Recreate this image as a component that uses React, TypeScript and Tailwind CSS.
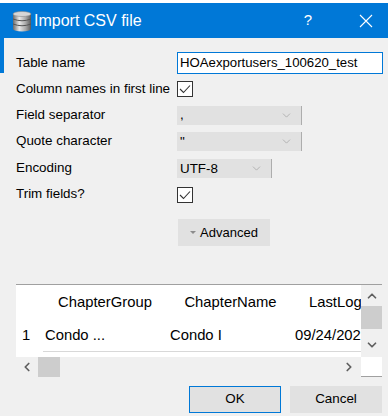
import { ChevronDown, ChevronLeft, ChevronRight, ChevronUp } from "lucide-react";

function DbIcon() {
    return (
        <svg width="22" height="22" viewBox="0 0 22 22">
            <defs>
                <linearGradient id="cyl" x1="0" x2="1" y1="0" y2="0">
                    <stop offset="0" stopColor="#6b6b6b" />
                    <stop offset="0.35" stopColor="#e8e8e8" />
                    <stop offset="0.7" stopColor="#a8a8a8" />
                    <stop offset="1" stopColor="#5a5a5a" />
                </linearGradient>
            </defs>
            <rect x="2" y="4" width="18" height="15" fill="url(#cyl)" />
            <ellipse cx="11" cy="19" rx="9" ry="2.5" fill="url(#cyl)" />
            <ellipse cx="11" cy="4" rx="9" ry="2.5" fill="#d6d6d6" stroke="#8a8a8a" strokeWidth="0.6" />
            <path d="M2 9 Q11 12.5 20 9" fill="none" stroke="#555" strokeWidth="1" />
            <path d="M2 14 Q11 17.5 20 14" fill="none" stroke="#555" strokeWidth="1" />
        </svg>
    );
}

function Check() {
    return (
        <div className="w-[16px] h-[16px] border border-[#333333] bg-white flex items-center justify-center">
            <svg width="12" height="10" viewBox="0 0 12 10">
                <path d="M1 5 L4.5 8.5 L11 1.5" fill="none" stroke="#333333" strokeWidth="1.1" />
            </svg>
        </div>
    );
}

function Combo({ value, width }: { value: string; width: string }) {
    return (
        <div className={`${width} h-[19px] bg-[#e1e1e1] border-r border-[#adadad] flex items-center justify-between pl-[3px] pr-[8px]`}>
            <span className="text-black leading-none">{value}</span>
            <ChevronDown size={13} strokeWidth={1.2} className="text-[#9a9a9a]" />
        </div>
    );
}

function Row({ label, h, children }: { label: string; h: string; children: React.ReactNode }) {
    return (
        <div className={`flex items-center ${h}`}>
            <div className="w-[161px] shrink-0 whitespace-nowrap text-black">{label}</div>
            {children}
        </div>
    );
}

export default function App() {
    return (
        <div className="w-[388px] h-[416px] bg-[#f0f0f0] flex flex-col overflow-hidden font-['Liberation_Sans',sans-serif] text-[13.4px] text-black">
            <div className="h-[3px] bg-white" />
            <div className="h-[35px] bg-[#0078d7] flex items-center text-white">
                <div className="ml-[11px] mt-[1px]"><DbIcon /></div>
                <span className="ml-[1px] text-[16px]">Import CSV file</span>
                <span className="ml-auto text-[15px] mr-[47px]">?</span>
                <svg width="14" height="14" viewBox="0 0 14 14" className="mr-[15px]">
                    <path d="M1 1 L13 13 M13 1 L1 13" stroke="white" strokeWidth="1.1" />
                </svg>
            </div>
            <div className="relative flex-1 flex flex-col">
                <div className="absolute left-0 top-0 w-[4px] h-[35px] bg-[#0078d7]" />
                <div className="flex flex-col pl-[16px] pt-[12px]">
                    <Row label="Table name" h="h-[26px]">
                        <div className="w-[206px] h-[22px] border border-[#0078d7] bg-white flex items-center px-[2px] text-[13.2px]">
                            HOAexportusers_100620_test
                        </div>
                    </Row>
                    <Row label="Column names in first line" h="h-[26px]">
                        <Check />
                    </Row>
                    <Row label="Field separator" h="h-[26px]">
                        <Combo value="," width="w-[125px]" />
                    </Row>
                    <Row label="Quote character" h="h-[27px]">
                        <Combo value={'"'} width="w-[125px]" />
                    </Row>
                    <Row label="Encoding" h="h-[27px]">
                        <Combo value="UTF-8" width="w-[95px]" />
                    </Row>
                    <Row label="Trim fields?" h="h-[25px]">
                        <Check />
                    </Row>
                    <div className="ml-[162px] mt-[12px] w-[92px] h-[27px] bg-[#e1e1e1] flex items-center justify-center gap-[4px] text-[13px]">
                        <span className="w-0 h-0 border-l-[3px] border-r-[3px] border-t-[3px] border-l-transparent border-r-transparent border-t-[#8c8c8c]" />
                        <span>Advanced</span>
                    </div>
                </div>
                <div className="ml-[16px] mt-[38px] w-[366px] border-t border-[#a0a0a0] flex flex-col text-[14.8px]">
                    <div className="flex h-[72px]">
                        <div className="w-[345px] bg-white overflow-hidden">
                            <div className="flex h-[34px] items-center whitespace-nowrap">
                                <div className="w-[27px] shrink-0" />
                                <div className="w-[124px] shrink-0 text-center">ChapterGroup</div>
                                <div className="w-[127px] shrink-0 text-center">ChapterName</div>
                                <div className="w-[67px] shrink-0 pl-[15px]">LastLog</div>
                            </div>
                            <div className="flex h-[33px] items-center whitespace-nowrap">
                                <div className="w-[27px] shrink-0 pl-[6px]">1</div>
                                <div className="w-[124px] shrink-0 pl-[2px] h-full flex items-center border-b border-[#d8d8d8]">Condo ...</div>
                                <div className="w-[127px] shrink-0 pl-[3px] h-full flex items-center border-b border-[#d8d8d8]">Condo I</div>
                                <div className="w-[67px] shrink-0 pl-[1px] h-full flex items-center border-b border-[#d8d8d8]">09/24/202</div>
                            </div>
                        </div>
                        <div className="w-[21px] flex flex-col items-center">
                            <ChevronUp size={14} strokeWidth={3} className="text-[#606060] mt-[4px]" />
                            <div className="w-[21px] h-[23px] bg-[#cdcdcd] mt-[3px]" />
                            <ChevronDown size={14} strokeWidth={3} className="text-[#606060] mt-[9px]" />
                        </div>
                    </div>
                    <div className="flex h-[20px]">
                        <div className="w-[345px] flex items-center">
                            <ChevronLeft size={14} strokeWidth={3} className="text-[#606060] ml-[4px]" />
                            <div className="w-[22px] h-[20px] bg-[#cdcdcd] ml-[4px]" />
                            <ChevronRight size={14} strokeWidth={3} className="text-[#606060] ml-auto mr-[5px]" />
                        </div>
                        <div className="w-[21px] bg-white border-b border-[#a0a0a0]" />
                    </div>
                </div>
                <div className="flex justify-end gap-[9px] mr-[6px] mt-[9px] text-[13.4px]">
                    <div className="w-[92px] h-[27px] bg-[#e1e1e1] border border-[#0078d7] flex items-center justify-center">OK</div>
                    <div className="w-[92px] h-[27px] bg-[#e1e1e1] flex items-center justify-center">Cancel</div>
                </div>
            </div>
        </div>
    );
}
